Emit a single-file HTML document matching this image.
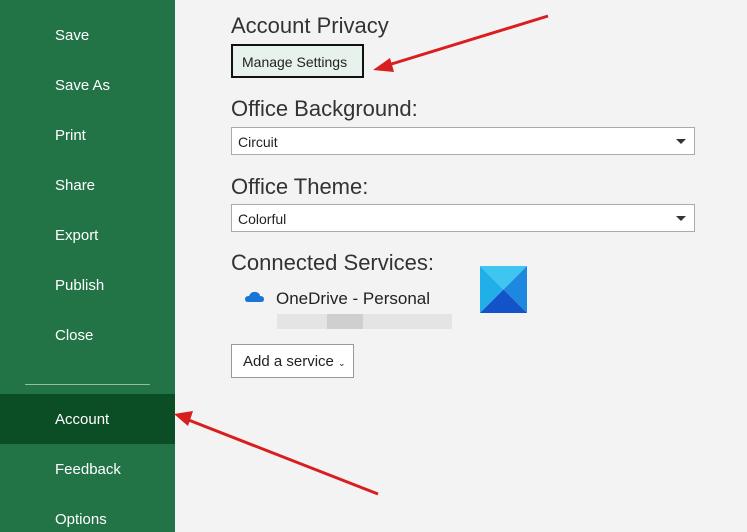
<!DOCTYPE html>
<html><head><meta charset="utf-8"><style>
*{margin:0;padding:0;box-sizing:border-box}
body{width:747px;height:532px;overflow:hidden;background:#f3f3f3;font-family:"Liberation Sans",sans-serif;position:relative}
#side{position:absolute;left:0;top:0;width:175px;height:532px;background:#227447}
.it{position:absolute;left:55px;color:#fff;font-size:15px}
#acc{position:absolute;left:0;top:394px;width:175px;height:50px;background:#0b4d24}
.hr{position:absolute;left:25px;top:384px;width:125px;height:1px;background:#8fc0a2}
.h{position:absolute;left:231px;font-size:22px;color:#333}
.dd{position:absolute;left:231px;width:464px;height:28px;background:#fff;border:1px solid #aaa;font-size:14px;color:#222;padding:6px 0 0 6px}
.dd:after{content:"";position:absolute;right:8px;top:11px;border-left:5px solid transparent;border-right:5px solid transparent;border-top:5px solid #333}
</style></head><body>
<div id="side">
<div id="acc"></div><div class="hr"></div>
<div class="it" style="top:27px">Save</div>
<div class="it" style="top:77px">Save As</div>
<div class="it" style="top:127px">Print</div>
<div class="it" style="top:177px">Share</div>
<div class="it" style="top:227px">Export</div>
<div class="it" style="top:277px">Publish</div>
<div class="it" style="top:327px">Close</div>
<div class="it" style="top:411px">Account</div>
<div class="it" style="top:461px">Feedback</div>
<div class="it" style="top:511px">Options</div>
</div>
<div class="h" style="top:13px">Account Privacy</div>
<div style="position:absolute;left:231px;top:44px;width:133px;height:34px;border:2px solid #111;background:#e8f2ec;font-size:14px;color:#222;padding:8px 0 0 9px">Manage Settings</div>
<div class="h" style="top:96px">Office Background:</div>
<div class="dd" style="top:127px">Circuit</div>
<div class="h" style="top:174px">Office Theme:</div>
<div class="dd" style="top:204px">Colorful</div>
<div class="h" style="top:250px">Connected Services:</div>
<svg style="position:absolute;left:245px;top:290px" width="20" height="13"><path d="M3 12 Q0 12 0 9 Q0 6 4 6 Q6 1 11 2 Q15 3 15 6 Q19 6 19 9 Q19 12 16 12Z" fill="#1a73d9"/></svg>
<div style="position:absolute;left:276px;top:289px;font-size:17px;color:#222">OneDrive - Personal</div>
<div style="position:absolute;left:277px;top:314px;width:175px;height:15px;background:#e4e4e4"></div>
<div style="position:absolute;left:327px;top:314px;width:36px;height:15px;background:#cfcfcf"></div>
<svg style="position:absolute;left:480px;top:266px" width="47" height="47">
<polygon points="0,0 47,0 23.5,23.5" fill="#3ec6f0"/>
<polygon points="0,0 0,47 23.5,23.5" fill="#22aee8"/>
<polygon points="47,0 47,47 23.5,23.5" fill="#1e88e0"/>
<polygon points="0,47 47,47 23.5,23.5" fill="#1353c9"/></svg>
<div style="position:absolute;left:231px;top:344px;width:123px;height:34px;border:1px solid #999;background:#fff;font-size:15px;color:#222;padding:8px 0 0 11px">Add a service <span style="font-size:9px">&#8964;</span></div>
<svg style="position:absolute;left:0;top:0" width="747" height="532">
<g stroke="#d81e1e" stroke-width="3" fill="#d81e1e">
<line x1="548" y1="16" x2="385" y2="66"/>
<polygon points="373,70 390,58 394,72" stroke="none"/>
<line x1="378" y1="494" x2="186" y2="419"/>
<polygon points="174,414 193,411 188,426" stroke="none"/>
</g></svg>
</body></html>
